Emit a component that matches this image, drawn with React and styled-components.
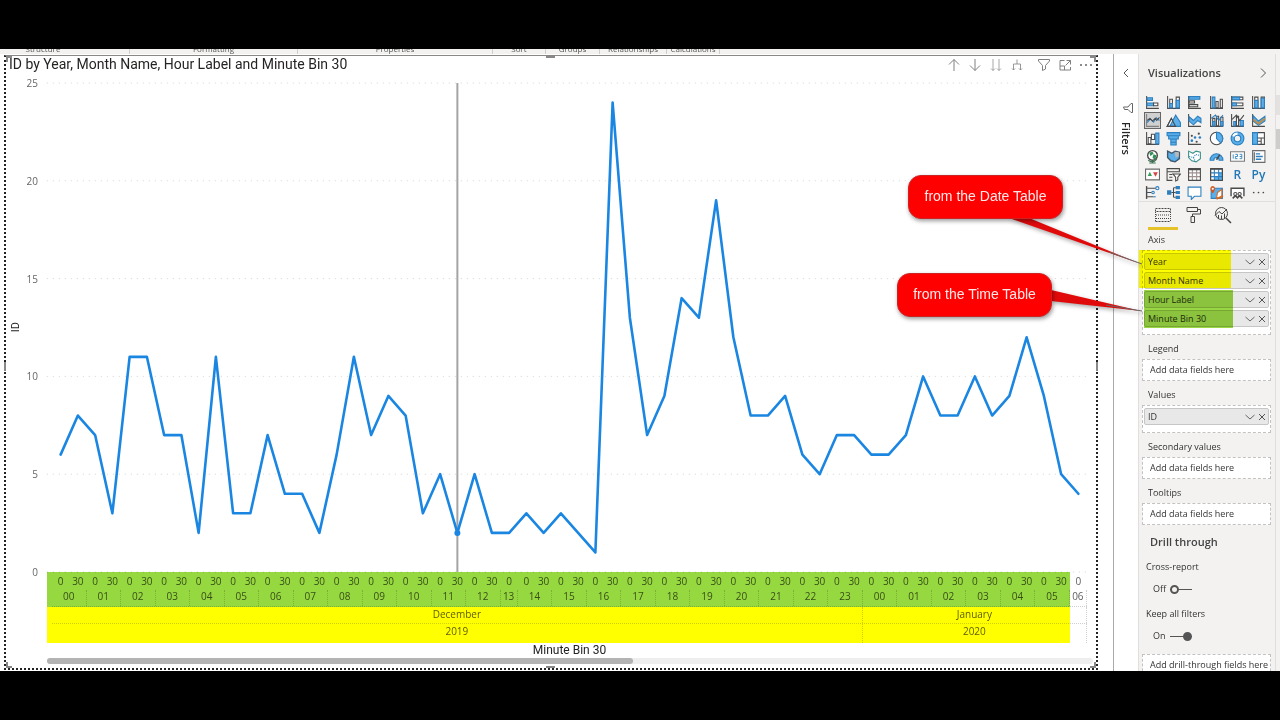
import React from "react";
import styled, { createGlobalStyle } from "styled-components";

const GlobalStyle = createGlobalStyle`
  *, *::before, *::after { box-sizing: border-box; }
  html, body { margin: 0; padding: 0; background: #000; }
  body { font-family: "Open Sans", "Noto Sans", sans-serif; color: #333; }
  button { font: inherit; color: inherit; background: none; border: 0; padding: 0; cursor: pointer; }
`;

/* ---------- frame ---------- */

const Page = styled.div`
  display: flex;
  flex-direction: column;
  height: 100vh;
  min-height: 600px;
  padding: 49px 0;
  background: #000;
`;

const Screen = styled.div`
  position: relative;
  flex: 1;
  min-height: 0;
  display: flex;
  flex-direction: column;
  overflow: hidden;
  background: #fff;
`;

const Ribbon = styled.header`
  flex: none;
  display: flex;
  align-items: flex-end;
  height: 5px;
  overflow: hidden;
  background: #f3f2f1;
`;

const RibbonGroup = styled.span`
  flex: none;
  width: ${(p) => p.$width}px;
  padding-right: ${(p) => p.$trail || 0}px;
  border-right: 1px solid #d0cecc;
  font-size: 8px;
  line-height: 10px;
  text-align: center;
  white-space: nowrap;
  color: #555;
`;

const Workspace = styled.div`
  flex: 1;
  min-height: 0;
  display: flex;
`;

/* ---------- report visual ---------- */

const Canvas = styled.main`
  flex: 1;
  min-width: 0;
  display: flex;
  padding: 1px 15px 1px 4px;
  background: #fff;
`;

const Visual = styled.section`
  position: relative;
  flex: 1;
  min-width: 0;
  display: flex;
  flex-direction: column;
  padding: 0 3px 4px 3px;
  border: 2px dotted #222;
  border-top: 1px solid #8a8886;
`;

const Handle = styled.i`
  position: absolute;
  border: 0 solid #8a8886;
  ${(p) =>
    ({
      tl: "top:0;left:0;width:6px;height:6px;border-width:2px 0 0 2px;",
      tr: "top:0;right:0;width:6px;height:6px;border-width:2px 2px 0 0;",
      bl: "bottom:0;left:0;width:6px;height:6px;border-width:0 0 2px 2px;",
      br: "bottom:0;right:0;width:6px;height:6px;border-width:0 2px 2px 0;",
      t: "top:0;left:calc(50% - 5px);width:9px;height:2px;border-width:2px 0 0 0;",
      b: "bottom:0;left:calc(50% - 5px);width:9px;height:2px;border-width:2px 0 0 0;",
      l: "top:50%;left:-2px;width:2px;height:9px;border-width:0 0 0 2px;",
      r: "top:50%;right:-2px;width:2px;height:9px;border-width:0 0 0 2px;",
    })[p.$at]}
`;

const VisualHeader = styled.div`
  display: flex;
  justify-content: space-between;
  align-items: flex-start;
  height: 19px;
`;

const VisualTitle = styled.h1`
  margin: 0;
  font: 400 14px/16px Roboto, sans-serif;
  color: #252423;
  white-space: nowrap;
`;

const VisualActions = styled.div`
  display: flex;
  gap: 7px;
  padding-top: 2px;
`;

const ActionButton = styled.button`
  display: flex;
  width: 14px;
  height: 14px;
  margin-left: ${(p) => (p.$apart ? 6 : 0)}px;
  svg { width: 14px; height: 14px; }
`;

const ChartBody = styled.div`
  flex: 1;
  min-height: 0;
  display: grid;
  grid-template-columns: 14px 25px 1fr;
  grid-template-rows: minmax(0, 1fr) auto auto;
  padding: 8px 6px 0 0;
`;

const YTitle = styled.div`
  align-self: center;
  justify-self: center;
  writing-mode: vertical-rl;
  transform: rotate(180deg);
  font: 400 11px/14px Roboto, sans-serif;
  color: #252423;
`;

const YLabels = styled.div`
  display: flex;
  flex-direction: column;
  justify-content: space-between;
  padding-right: 10px;
  font-size: 10px;
  color: #666;
  text-align: right;
  span { height: 0; line-height: 0; }
`;

const PlotSvg = styled.svg`
  display: block;
  width: 100%;
  height: 100%;
  overflow: visible;
`;

const PlotCell = styled.div`
  min-height: 0;
  padding-left: 4px;
`;

const Category = styled.div`
  grid-column: 3;
  position: relative;
  padding-left: 4px;
  font-size: 10px;
  color: #5e5e5e;
`;

const Band = styled.div`
  position: absolute;
  left: -1px;
  right: calc(100% / 60);
  top: ${(p) => p.$top}px;
  height: ${(p) => p.$height}px;
  background: ${(p) => p.$color};
  mix-blend-mode: multiply;
  pointer-events: none;
`;

const Level = styled.div`
  display: grid;
  grid-template-columns: repeat(60, minmax(0, 1fr));
  height: ${(p) => p.$height}px;
  line-height: ${(p) => p.$line}px;
  border-bottom: ${(p) => (p.$ruled ? "1px dotted #d0d0d0" : "0")};
`;

const Tick = styled.span`
  grid-column: span ${(p) => p.$span};
  display: flex;
  justify-content: center;
  border-right: ${(p) => (p.$ruled ? "1px dotted #d0d0d0" : "0")};
  white-space: nowrap;
`;

const XTitle = styled.div`
  grid-column: 3;
  padding-left: 4px;
  font: 400 12px/15px Roboto, sans-serif;
  color: #252423;
  text-align: center;
`;

const ScrollTrack = styled.div`
  height: 6px;
  margin: 0 0 0 38px;
  border-radius: 3px;
  background: #eee;
`;

const ScrollThumb = styled.div`
  width: 56%;
  height: 6px;
  border-radius: 3px;
  background: #b3b3b3;
`;

const values = [
  6, 8, 7, 3, 11, 11, 7, 7, 2, 11, 3, 3, 7, 4, 4, 2, 6, 11, 7, 9, 8, 3, 5, 2, 5,
  2, 2, 3, 2, 3, 2, 1, 24, 13, 7, 9, 14, 13, 19, 12, 8, 8, 9, 6, 5, 7, 7, 6, 6,
  7, 10, 8, 8, 10, 8, 9, 12, 9, 5, 4,
];

const hourNames = [
  ...Array.from({ length: 24 }, (_, i) => i),
  0, 1, 2, 3, 4, 5, 6,
].map((h) => String(h).padStart(2, "0"));

/* Hour 13 and the closing 06 have only their first half hour. */
const hours = hourNames.map((name, i) => ({
  name,
  span: i === 13 || i === hourNames.length - 1 ? 1 : 2,
}));

const minutes = hours.flatMap((h) => (h.span === 2 ? ["0", "30"] : ["0"]));

const HOVERED = 23;

function LinePlot() {
  const points = values.map((v, i) => `${i + 0.5},${25 - v}`).join(" ");
  return (
    <PlotSvg viewBox="0 0 60 25" preserveAspectRatio="none" role="img" aria-label="ID by half hour">
      {[0, 5, 10, 15, 20, 25].map((v) => (
        <line key={v} x1="-0.3" x2="60" y1={v} y2={v} stroke="#d4d4d4" strokeWidth="1" strokeDasharray="1 5" vectorEffect="non-scaling-stroke" />
      ))}
      <line x1={HOVERED + 0.5} x2={HOVERED + 0.5} y1="0" y2="25" stroke="#a4a4a4" strokeWidth="2" vectorEffect="non-scaling-stroke" />
      <polyline points={points} fill="none" stroke="#1a86e2" strokeWidth="2.6" strokeLinejoin="round" strokeLinecap="round" vectorEffect="non-scaling-stroke" />
      <line x1={HOVERED + 0.5} x2={HOVERED + 0.5} y1={25 - values[HOVERED]} y2={25 - values[HOVERED]} stroke="#1a86e2" strokeWidth="6" strokeLinecap="round" vectorEffect="non-scaling-stroke" />
    </PlotSvg>
  );
}

const actions = [
  ["Drill up", <path d="M7 13V1.500M2 6.500l5-5 5 5" />],
  ["Drill down", <path d="M7 1v11.500M2 7.500l5 5 5-5" />],
  ["Next level", <path d="M4 1v11.500M2 10.500l2 2 2-2M10 1v11.500M8 10.500l2 2 2-2" opacity=".7" />],
  ["Expand all", <path d="M7 1.500V6M3.500 12V6h7v6M2 10.500L3.500 12 5 10.500M9 10.500l1.500 1.500 1.500-1.500" opacity=".8" />],
  ["Filters", <path d="M1.500 1.500h11v1.500L8.500 7.500V11l-3 1.500V7.500L1.500 3z" />, true],
  ["Focus mode", <path d="M6.500 2.500H2v9.500h10.500V9M2 8h4.500v4M8.500 2.500h4v4M12.500 2.500L7.500 7.500" />],
  ["More options", <g fill="#666" stroke="none"><circle cx="2" cy="7" r="1" /><circle cx="7" cy="7" r="1" /><circle cx="12" cy="7" r="1" /></g>],
];

function ReportVisual() {
  return (
    <Canvas>
      <Visual>
        {["tl", "tr", "bl", "br", "t", "b", "l", "r"].map((at) => <Handle key={at} $at={at} />)}
        <VisualHeader>
          <VisualTitle>ID by Year, Month Name, Hour Label and Minute Bin 30</VisualTitle>
          <VisualActions>
            {actions.map(([name, drawing, apart]) => (
              <ActionButton key={name} type="button" aria-label={name} $apart={apart}>
                <svg viewBox="0 0 14 14" fill="none" stroke="#808080" strokeWidth="1">{drawing}</svg>
              </ActionButton>
            ))}
          </VisualActions>
        </VisualHeader>
        <ChartBody>
          <YTitle>ID</YTitle>
          <YLabels>
            {[25, 20, 15, 10, 5, 0].map((v) => <span key={v}>{v}</span>)}
          </YLabels>
          <PlotCell><LinePlot /></PlotCell>
          <Category>
            <Level $height={18} $line={18}>
              {minutes.map((m, i) => <Tick key={i} $span={1}>{m}</Tick>)}
            </Level>
            <Level $height={17} $line={13} $ruled>
              {hours.map((h, i) => <Tick key={i} $span={h.span} $ruled>{h.name}</Tick>)}
            </Level>
            <Level $height={17} $line={14} $ruled>
              <Tick $span={47} $ruled>December</Tick>
              <Tick $span={13} $ruled>January</Tick>
            </Level>
            <Level $height={19} $line={15}>
              <Tick $span={47} $ruled>2019</Tick>
              <Tick $span={13} $ruled>2020</Tick>
            </Level>
            <Band $top={0} $height={35} $color="#96d840" />
            <Band $top={35} $height={36} $color="#ffff00" />
          </Category>
          <XTitle>Minute Bin 30</XTitle>
        </ChartBody>
        <ScrollTrack><ScrollThumb /></ScrollTrack>
      </Visual>
    </Canvas>
  );
}

/* ---------- side panes ---------- */

const FiltersPane = styled.aside`
  flex: none;
  width: 26px;
  display: flex;
  flex-direction: column;
  align-items: center;
  padding-top: 13px;
  border-left: 1px solid #aaa;
  border-right: 1px solid #e1dfdd;
  background: #fff;
`;

const IconButton = styled.button`
  display: flex;
  svg { width: 12px; height: 12px; }
`;

const FilterGlyph = styled.svg`
  width: 12px;
  height: 12px;
  margin: 23px 0 8px 3px;
`;

const FiltersTitle = styled.h2`
  margin: 0;
  writing-mode: vertical-rl;
  font-size: 11px;
  line-height: 16px;
  font-weight: 600;
  color: #252423;
`;

const VizPane = styled.aside`
  flex: none;
  width: 137px;
  display: flex;
  flex-direction: column;
  overflow: hidden;
  background: #f3f2f1;
  border-right: 1px solid #e1dfdd;
  > * { flex: none; }
`;

const VizHeader = styled.div`
  display: flex;
  justify-content: space-between;
  align-items: center;
  height: 38px;
  padding: 0 6px 0 9px;
`;

const PaneTitle = styled.h2`
  margin: 0;
  font-size: 11px;
  line-height: 16px;
  font-weight: 600;
  color: #444;
`;

const Gallery = styled.div`
  display: grid;
  grid-template-columns: repeat(6, 1fr);
  grid-auto-rows: 18px;
  padding: 2px 6px 0 3px;
  height: 110px;
  border-bottom: 1px solid #e1dfdd;
`;

const ChartType = styled.button`
  display: flex;
  align-items: center;
  justify-content: center;
  width: 17px;
  height: 17px;
  justify-self: center;
  border: ${(p) => (p.$active ? "1px solid #666" : "0")};
  background: ${(p) => (p.$active ? "#d0d0d0" : "none")};
  svg { flex: none; width: 15px; height: 15px; }
`;

const Letters = styled.span`
  font-size: 12px;
  line-height: 16px;
  font-weight: 600;
  color: #2277b5;
`;

const Tabs = styled.div`
  display: flex;
  padding-left: 9px;
  height: 29px;
`;

const Tab = styled.button`
  display: flex;
  align-items: center;
  justify-content: center;
  width: 30px;
  height: 28px;
  border-bottom: 3px solid ${(p) => (p.$active ? "#e6c229" : "transparent")};
  svg { width: 18px; height: 18px; }
`;

const Wells = styled.div`
  display: flex;
  flex-direction: column;
  gap: 7px;
  padding: 2px 4px 0 3px;
`;

const Well = styled.section`
  position: relative;
`;

const WellName = styled.h3`
  margin: 0 0 3px;
  padding-left: 6px;
  font-size: 9px;
  line-height: 14px;
  font-weight: 400;
  color: #333;
`;

const WellBox = styled.div`
  display: flex;
  flex-direction: column;
  gap: 2px;
  padding: ${(p) => (p.$filled ? "2px 1px 7px" : "0 7px")};
  border: 1px dashed #c4c2c0;
  background: #fff;
  font-size: 9px;
  line-height: 20px;
  white-space: nowrap;
`;

const Field = styled.div`
  display: flex;
  align-items: center;
  gap: 2px;
  height: 17px;
  padding: 0 1px 0 3px;
  border: 1px solid #c8c6c4;
  border-radius: 2px;
  background: #e9e8e8;
  line-height: 15px;
  svg { width: 10px; height: 10px; }
`;

const FieldName = styled.span`
  flex: 1;
`;

const Marker = styled.div`
  position: absolute;
  left: ${(p) => p.$left}px;
  top: ${(p) => p.$top}px;
  right: ${(p) => p.$right}px;
  height: 38px;
  background: ${(p) => p.$color};
  mix-blend-mode: multiply;
  pointer-events: none;
`;

const Drill = styled.section`
  padding: 9px 4px 0 3px;
`;

const DrillTitle = styled(PaneTitle)`
  padding-left: 8px;
  margin-bottom: 10px;
`;

const Setting = styled.label`
  display: block;
  padding-left: 4px;
  margin-bottom: 11px;
  font-size: 9px;
  line-height: 14px;
`;

const SwitchRow = styled.span`
  display: flex;
  align-items: center;
  gap: 4px;
  margin-top: 8px;
  padding-left: 7px;
`;

const Switch = styled.input`
  appearance: none;
  display: flex;
  align-items: center;
  width: 22px;
  height: 9px;
  margin: 0;
  background: linear-gradient(#555, #555) center / 100% 1px no-repeat;
  &::before {
    content: "";
    width: 9px;
    height: 9px;
    border: 2px solid #555;
    border-radius: 50%;
    background: #f3f2f1;
  }
  &:checked::before { margin-left: auto; background: #555; }
`;

const FieldsEdge = styled.aside`
  flex: 1 0 4px;
  max-width: 4px;
  display: flex;
  flex-direction: column;
  gap: 14px;
  padding-top: 41px;
  background: #f3f2f1;
`;

const EdgeBlock = styled.div`
  height: 20px;
  background: ${(p) => p.$color};
`;

const D = "#4a4a4a";
const B = "#2d7fbe";
const F = "#5aaeea";
const axis = <path d="M1.500 1v11.500H13" stroke={D} />;

const chartTypes = [
  ["Stacked bar chart", <>{axis}<path d="M2 2.500h5v2.500H2zM2 7.500h6v2.500H2z" fill={F} stroke={B} /><path d="M8 7.500h4v2.500H8z" stroke={D} fill="#fff" /></>],
  ["Stacked column chart", <>{axis}<path d="M3.500 4h2.500v8H3.500zM9.500 2h3v10h-3z" fill="#fff" stroke={D} /><path d="M3.500 8h2.500v4H3.500zM9.500 5h3v7h-3z" fill={F} stroke={B} /></>],
  ["Clustered bar chart", <>{axis}<path d="M2 1.500h10v2.500H2z" fill={F} stroke={B} /><path d="M2 5.500h5v2H2zM2 9h8v2H2z" fill="#fff" stroke={D} /></>],
  ["Clustered column chart", <>{axis}<path d="M3 2h2.500v10H3z" fill={F} stroke={B} /><path d="M6.500 6H8.500v6H6.500zM10.500 4h2v8h-2z" fill="#fff" stroke={D} /></>],
  ["100% stacked bar chart", <>{axis}<path d="M2 2h10v2.500H2zM2 7.500h10V10H2z" fill="#fff" stroke={D} /><path d="M2 2h7v2.500H2zM2 7.500h4V10H2z" fill={F} stroke={B} /></>],
  ["100% stacked column chart", <>{axis}<path d="M3.500 2h3v10h-3zM9.500 2h3v10h-3z" fill="#fff" stroke={D} /><path d="M3.500 5h3v7h-3zM9.500 3h3v9h-3z" fill={F} stroke={B} /></>],

  ["Line chart", <><path d="M1.500 1v11.500H13" stroke={D} opacity=".6" /><path d="M2 9l3-3.500 3 3 2.500-4 3 2.500" stroke={B} /><path d="M2 7l2.500-2L7 7.500 9.500 5l1.500 2 2.500-3" stroke={D} /></>],
  ["Area chart", <><path d="M1 12.500L5 5l4 7.500z" fill="#fff" stroke={D} /><path d="M3.500 12.500L9 2l4.500 7v3.500z" fill={F} stroke={B} /><path d="M1 12.500L5 5l4 7.500z" stroke={D} /></>],
  ["Stacked area chart", <>{axis}<path d="M2 3.500l4 3.500 4-4 3 2v4l-3-2-4 4-4-3.500z" fill={F} stroke={B} /></>],
  ["Line and stacked column chart", <>{axis}<path d="M3.500 5h2v7h-2zM7 3h2v9H7zM11 4h2v8h-2z" fill="#fff" stroke={D} /><path d="M3.500 8h2v4h-2zM11 8h2v4h-2z" fill={F} stroke={B} /><path d="M2 5l4-3 3 5 4-5" stroke={B} /></>],
  ["Line and clustered column chart", <>{axis}<path d="M3.500 8h2v4h-2zM9.500 7h3v5h-3z" fill={F} stroke={B} /><path d="M6 3h2v9H6z" fill="#fff" stroke={D} /><path d="M2 6l4-4 3 5 4-5" stroke={D} /></>],
  ["Ribbon chart", <>{axis}<path d="M2 2.500l5 5 6-4.500v4.500l-6 4-5-4z" fill={F} stroke={B} /><path d="M2 6l5 4 6-5" stroke="#c88a3a" strokeWidth="1.500" /></>],

  ["Waterfall chart", <>{axis}<path d="M3 6h2.500v6H3zM6 3h3v5H6z" fill="#fff" stroke={D} /><path d="M10 2h3v10h-3z" fill={F} stroke={B} /></>],
  ["Funnel", <path d="M1 1.500h12v3H1zM2.500 4.500h9v3h-9zM4.500 7.500h5v3h-5zM4.500 10.500h5V13h-5z" fill={F} stroke={B} />],
  ["Scatter chart", <>{axis}<g fill={B}><circle cx="4.500" cy="9" r="1.200" /><circle cx="7.500" cy="6" r="1.200" /><circle cx="12" cy="6" r="1.200" /></g><g fill={D}><circle cx="4.500" cy="4.500" r="1" /><circle cx="9" cy="10" r="1" /><circle cx="11" cy="2.500" r="1" /></g></>],
  ["Pie chart", <><circle cx="7" cy="7" r="5.800" fill="#fff" stroke={D} /><path d="M7 7V1.200A5.800 5.800 0 0 1 11 11.200z" fill={F} stroke={B} /></>],
  ["Donut chart", <><circle cx="7" cy="7" r="4.500" stroke={B} strokeWidth="4" /><circle cx="7" cy="7" r="4.500" stroke={F} strokeWidth="2" /><path d="M7 2.500A4.500 4.500 0 0 0 3 5" stroke="#fff" strokeWidth="2" /></>],
  ["Treemap", <><path d="M1.500 1.500h11v11h-11z" fill="#fff" stroke={D} /><path d="M1.500 1.500h4.500v11H1.500z" fill={F} stroke={B} /><path d="M6 6.500h6.500M9.500 6.500v6M6 9.500h3.500" stroke={D} /></>],

  ["Map", <><circle cx="7" cy="6" r="4.500" fill="#fff" stroke={D} strokeWidth="1.300" /><path d="M4 3.500l3-1 1 2-3 2zM8 5l3 1-2 4-2-2z" fill="#2f8f57" /><path d="M3 10.500c3 2 6 1.500 8-1M4 13h6M7 11v2" stroke="#39724f" /></>],
  ["Filled map", <><path d="M1.500 2l4 2 3-2 4 1v6l-4 3-4-1-3-3z" fill={F} stroke="#40566b" strokeWidth="1.300" /><path d="M8 2.500l4 .5v4l-3 1z" fill="#b8b8b8" /></>],
  ["Shape map", <><path d="M1.500 2l4 2 3-2 4 1v6l-4 3-4-1-3-3z" fill="#fff" stroke="#3c9189" /><path d="M2 7l4 1 2-3 4 1M6 8l2 4" stroke={B} strokeDasharray="1 1" /></>],
  ["Gauge", <><path d="M1 10.500a6 6 0 0 1 12 0H9.500a2.500 2.500 0 0 0-5 0z" fill={F} stroke={B} /><path d="M7 10L10 5.500" stroke={D} strokeWidth="1.500" /></>],
  ["Card", <><path d="M.5 2.500h13v9H.5z" fill="#fff" stroke={D} opacity=".7" /><path d="M3 5v4M5 5h2v2H5v2h2M9 5h2v4H9M9 7h2" stroke={B} strokeWidth=".8" /></>],
  ["Multi-row card", <><path d="M1.500 1.500h11.500v11H1.500z" fill="#fff" stroke={D} opacity=".8" /><path d="M4.500 4.500h4M4.500 7h6.500M4.500 9.500h5" stroke={B} strokeWidth="1.300" /><path d="M3 3v8" stroke={D} /></>],

  ["KPI", <><path d="M.5 2h13v10H.5z" fill="#fff" stroke={D} opacity=".8" /><path d="M2.500 8.500l2-4 2 4z" fill="#3a9d57" /><path d="M7.500 5h4.500L9.800 9z" fill="#d64545" /></>],
  ["Slicer", <><path d="M1 1.500h11.500v3H1zM1 4.500v8h5M3 7h3M3 9.500h3" stroke={D} /><path d="M6.500 6.500h7L11 9.500V12l-2 1V9.500z" fill="#fff" stroke={D} /></>],
  ["Table", <><path d="M1.500 1.500h11v11h-11z" fill="#fff" /><path d="M1.500 5.500h11M1.500 9h11M5 2v10.500M9 2v10.500" stroke="#a09090" /><path d="M1.500 1.500h11v11h-11zM1.500 2.500h11" stroke={D} /></>],
  ["Matrix", <><path d="M1.500 1.500h11v11h-11z" fill="#fff" stroke={D} /><path d="M5 9h4v3.500H5zM9 5.500h3.500v7H9z" fill={F} /><path d="M1.500 5.500h11M1.500 9h11M5 2v10.500M9 2v10.500" stroke={B} /><path d="M1.500 2h11M1.500 2v10.500h11V2" stroke={D} /></>],
  ["R script visual", "R"],
  ["Python visual", "Py"],

  ["Key influencers", <><path d="M1.500 1v12" stroke={D} strokeWidth="1.300" /><path d="M2 3h8M2 7h4M2 11h6" stroke={D} /><circle cx="11.500" cy="3" r="1.500" stroke={B} /><circle cx="7.500" cy="7" r="1.200" stroke={B} /><path d="M8 11h2" stroke={B} /></>],
  ["Decomposition tree", <><path d="M1 5h4v4H1zM9 1h4v3H9zM9 5.500h4v3H9zM9 10h4v3H9z" fill={B} /><path d="M5 7h4M7 2.500v9M7 2.500h2M7 11.500h2" stroke={D} /></>],
  ["Q&A", <path d="M1 2h12v8.500H7l-3 3v-3H1z" fill="#fff" stroke={B} />],
  ["ArcGIS map", <><path d="M2 3h10.500v9.500H2z" fill={F} stroke={B} /><path d="M7 12l1-5 4-3v8z" fill="#fff" stroke="#d46a28" /><path d="M3.500 8C0 4 1.500 1 3.500 1S7 4 3.500 8z" fill="#d4581c" /><circle cx="3.500" cy="3.500" r="1" fill="#fff" /><path d="M7 13l6-3" stroke="#d46a28" strokeWidth="1.500" /></>],
  ["Paginated report", <><path d="M1 10.500V3h12v7.500" fill="#fff" stroke={D} strokeWidth="1.300" /><circle cx="5" cy="8.500" r="1.500" stroke={D} /><circle cx="9" cy="8.500" r="1.500" stroke={D} /><path d="M2.500 12.500l2.500-2.500 2 2 2-2 2.500 2.500" stroke={D} strokeWidth="1.500" /></>],
  ["More visuals", <g fill={D}><circle cx="2.500" cy="7" r=".8" /><circle cx="7" cy="7" r=".8" /><circle cx="11.500" cy="7" r=".8" /></g>],
];

const tabs = [
  ["Fields", <><path d="M1.500 2.500h15v3h-15zM1.500 15.500h15" strokeDasharray="2 1" /><path d="M1.500 6v9.500M16.500 6v9.500M2 9h14M2 12.500h14" strokeDasharray="1 1" /></>],
  ["Format", <><path d="M3 1.500h10.500v4H3zM13.500 3.500h3V8H8.500v2.500" /><path d="M7 10.500h3.500v6H7z" /></>],
  ["Analytics", <><circle cx="7.500" cy="7.500" r="6" /><path d="M12 12l5 5" strokeWidth="1.500" /><path d="M1 9.500l4-4 3 2.500 5-5M4.500 9v3.500M7.500 9.500V13M10.500 7.500V12" /></>],
];

const FieldItem = ({ name }) => (
  <Field>
    <FieldName>{name}</FieldName>
    <IconButton type="button" aria-label={`Options for ${name}`}>
      <svg viewBox="0 0 10 10" fill="none" stroke="#666"><path d="M.5 3L5 7l4.500-4" /></svg>
    </IconButton>
    <IconButton type="button" aria-label={`Remove ${name}`}>
      <svg viewBox="0 0 10 10" fill="none" stroke="#555"><path d="M2 2l6 6M8 2l-6 6" /></svg>
    </IconButton>
  </Field>
);

const wells = [
  { name: "Axis", fields: ["Year", "Month Name", "Hour Label", "Minute Bin 30"] },
  { name: "Legend", fields: [] },
  { name: "Values", fields: ["ID"] },
  { name: "Secondary values", fields: [] },
  { name: "Tooltips", fields: [] },
];

function Visualizations() {
  return (
    <VizPane>
      <VizHeader>
        <PaneTitle>Visualizations</PaneTitle>
        <IconButton type="button" aria-label="Collapse pane">
          <svg viewBox="0 0 12 12" fill="none" stroke="#555"><path d="M4 1.500L8.500 6 4 10.500" /></svg>
        </IconButton>
      </VizHeader>
      <Gallery>
        {chartTypes.map(([name, drawing]) => (
          <ChartType key={name} type="button" aria-label={name} $active={name === "Line chart"}>
            {typeof drawing === "string"
              ? <Letters>{drawing}</Letters>
              : <svg viewBox="0 0 14 14" fill="none">{drawing}</svg>}
          </ChartType>
        ))}
      </Gallery>
      <Tabs>
        {tabs.map(([name, drawing], i) => (
          <Tab key={name} type="button" aria-label={name} $active={i === 0}>
            <svg viewBox="0 0 18 18" fill="none" stroke="#444">{drawing}</svg>
          </Tab>
        ))}
      </Tabs>
      <Wells>
        {wells.map((w) => (
          <Well key={w.name}>
            <WellName>{w.name}</WellName>
            <WellBox $filled={w.fields.length > 0}>
              {w.fields.length
                ? w.fields.map((f) => <FieldItem key={f} name={f} />)
                : "Add data fields here"}
            </WellBox>
            {w.name === "Axis" && (
              <>
                <Marker $left={-3} $top={17} $right={40} $color="#ffff00" />
                <Marker $left={2} $top={57} $right={38} $color="#98d644" />
              </>
            )}
          </Well>
        ))}
      </Wells>
      <Drill>
        <DrillTitle>Drill through</DrillTitle>
        <Setting>
          Cross-report
          <SwitchRow>Off <Switch type="checkbox" role="switch" /></SwitchRow>
        </Setting>
        <Setting>
          Keep all filters
          <SwitchRow>On <Switch type="checkbox" role="switch" defaultChecked /></SwitchRow>
        </Setting>
        <WellBox>Add drill-through fields here</WellBox>
      </Drill>
    </VizPane>
  );
}

/* ---------- annotations ---------- */

const Callout = styled.div`
  position: absolute;
  top: ${(p) => p.$top}px;
  right: ${(p) => p.$right}px;
  display: flex;
  align-items: center;
  justify-content: center;
  width: 155px;
  height: 44px;
  padding-bottom: 2px;
  border: 1px solid #c22;
  border-radius: 13px;
  background: #fe0000;
  box-shadow: 1px 2px 4px rgba(0, 0, 0, 0.4);
  color: #ffe8e8;
  font: 400 14px/18px "Liberation Sans", Arial, sans-serif;
  white-space: nowrap;
`;

const CalloutTails = styled.svg`
  position: absolute;
  top: 166px;
  right: 138px;
  width: 136px;
  height: 98px;
  pointer-events: none;
  filter: drop-shadow(1px 2px 2px rgba(0, 0, 0, 0.35));
`;

export default function App() {
  return (
    <>
      <GlobalStyle />
      <Page>
        <Screen>
          <Ribbon>
            <RibbonGroup $width={130} $trail={43}>Structure</RibbonGroup>
            <RibbonGroup $width={168}>Formatting</RibbonGroup>
            <RibbonGroup $width={195}>Properties</RibbonGroup>
            <RibbonGroup $width={53}>Sort</RibbonGroup>
            <RibbonGroup $width={54}>Groups</RibbonGroup>
            <RibbonGroup $width={67}>Relationships</RibbonGroup>
            <RibbonGroup $width={53}>Calculations</RibbonGroup>
          </Ribbon>
          <Workspace>
            <ReportVisual />
            <FiltersPane>
              <IconButton type="button" aria-label="Expand filters">
                <svg viewBox="0 0 12 12" fill="none" stroke="#555"><path d="M8 2L4 6l4 4" /></svg>
              </IconButton>
              <FilterGlyph viewBox="0 0 12 12" fill="none" stroke="#666">
                <path d="M10.500 1.500v9H9L6 7.500H2.500L1.500 5H6L9 1.500z" />
              </FilterGlyph>
              <FiltersTitle>Filters</FiltersTitle>
            </FiltersPane>
            <Visualizations />
            <FieldsEdge>
              <EdgeBlock $color="#e4e2e0" />
              <EdgeBlock $color="#cfcdcb" />
            </FieldsEdge>
          </Workspace>
          <CalloutTails viewBox="0 0 136 98">
            <path d="M3 3h20L135 49z" fill="#e00a0a" />
            <path d="M45 75v11l90 10z" fill="#e00a0a" />
            <path d="M103 37l33 12M100 90l36 6" stroke="#666" strokeWidth="1" />
          </CalloutTails>
          <Callout $top={126} $right={217}>from the Date Table</Callout>
          <Callout $top={224} $right={228}>from the Time Table</Callout>
        </Screen>
      </Page>
    </>
  );
}
